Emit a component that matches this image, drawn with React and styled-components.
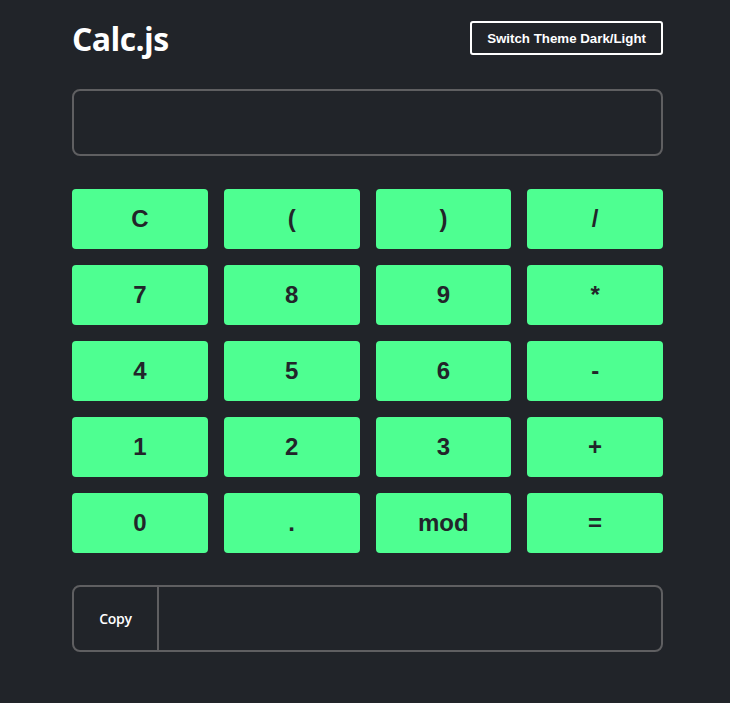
import React from 'react';
import styled, {createGlobalStyle} from 'styled-components';

const GlobalStyle = createGlobalStyle`
  html, body {
    margin: 0;
    padding: 0;
    background: #212429;
  }
`;

const Page = styled.div`
  width: 591px;
  padding: 21px 0 40px 72px;
  font-family: "Liberation Sans", Arial, sans-serif;
`;

const Header = styled.header`
  display: flex;
  justify-content: space-between;
  align-items: center;
  height: 34px;
`;

const Title = styled.h1`
  margin: 0;
  font-family: "Open Sans", sans-serif;
  font-weight: 700;
  font-size: 32px;
  letter-spacing: -0.6px;
  color: #fff;
`;

const ThemeButton = styled.button`
  height: 34px;
  padding: 0 15px;
  background: transparent;
  border: 2px solid #fff;
  border-radius: 3px;
  color: #fff;
  font-family: "Liberation Sans", Arial, sans-serif;
  font-weight: 700;
  font-size: 13.3px;
`;

const Display = styled.div`
  box-sizing: border-box;
  margin-top: 34px;
  height: 67px;
  border: 2px solid #5f5f61;
  border-radius: 8px;
`;

const Keys = styled.div`
  display: grid;
  grid-template-columns: repeat(4, 1fr);
  gap: 16px;
  margin-top: 33px;
`;

const Key = styled.button`
  height: 60px;
  border: none;
  border-radius: 4px;
  background: #4eff91;
  color: #22252a;
  font-family: "Liberation Sans", Arial, sans-serif;
  font-weight: 700;
  font-size: 24px;
  padding: 0;
`;

const CopyBar = styled.div`
  box-sizing: border-box;
  display: flex;
  margin-top: 32px;
  height: 67px;
  border: 2px solid #5f5f61;
  border-radius: 8px;
`;

const CopyButton = styled.button`
  width: 85px;
  background: transparent;
  border: none;
  border-right: 2px solid #5f5f61;
  color: #fff;
  font-family: "Open Sans", sans-serif;
  font-weight: 600;
  font-size: 14px;
  letter-spacing: -0.3px;
  padding: 0;
`;

const Output = styled.div`
  flex: 1;
`;

const keys = ['C', '(', ')', '/', '7', '8', '9', '*', '4', '5', '6', '-', '1', '2', '3', '+', '0', '.', 'mod', '='];

export default function App() {
    return (
        <Page>
            <GlobalStyle/>
            <Header>
                <Title>Calc.js</Title>
                <ThemeButton>Switch Theme Dark/Light</ThemeButton>
            </Header>
            <Display/>
            <Keys>
                {keys.map((k) => <Key key={k}>{k}</Key>)}
            </Keys>
            <CopyBar>
                <CopyButton>Copy</CopyButton>
                <Output/>
            </CopyBar>
        </Page>
    );
}
